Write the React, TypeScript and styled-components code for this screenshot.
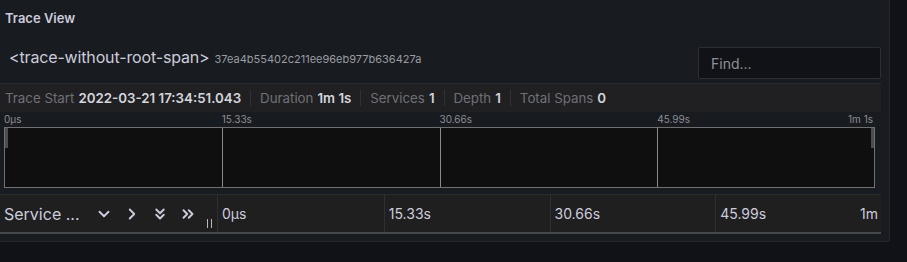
import styled, { createGlobalStyle } from "styled-components";
import { ChevronDown, ChevronRight, ChevronsDown, ChevronsRight } from "lucide-react";

const GlobalStyle = createGlobalStyle`
  html, body {
    margin: 0;
    padding: 0;
    background: #111217;
  }
  body {
    font-family: Inter, "Noto Sans", sans-serif;
    color: #ccccdc;
  }
`;

const Page = styled.div`
  width: 907px;
  height: 262px;
  overflow: hidden;
  background: #111217;
`;

const Panel = styled.div`
  width: 890px;
  height: 242px;
  box-sizing: border-box;
  background: #181b1f;
  border-right: 1px solid #25272c;
  border-bottom: 1px solid #25272c;
  border-bottom-right-radius: 3px;
  padding: 0 8px 0 0;
  display: flex;
  flex-direction: column;
`;

const PanelTitle = styled.div`
  height: 36px;
  padding-left: 5px;
  display: flex;
  align-items: center;
  font-size: 13px;
  font-weight: 600;
  color: #ccccdc;
`;

const Header = styled.div`
  height: 47px;
  display: flex;
  align-items: flex-start;
  justify-content: space-between;
`;

const TitleGroup = styled.div`
  display: flex;
  align-items: baseline;
  gap: 5px;
  padding: 10px 0 0 9px;
`;

const TraceName = styled.span`
  font-size: 16px;
  line-height: 22px;
  letter-spacing: -0.15px;
  color: #ccccdc;
`;

const TraceId = styled.span`
  font-size: 11px;
  color: #9a9ba3;
`;

const FindInput = styled.input`
  box-sizing: border-box;
  width: 183px;
  height: 32px;
  margin-top: 11px;
  background: #111217;
  border: 1px solid #2c2e33;
  border-radius: 2px;
  padding: 0 12px;
  font-family: Inter, sans-serif;
  font-size: 14px;
  color: #ccccdc;
  outline: none;

  &::placeholder {
    color: #8e8f96;
  }
`;

const Summary = styled.div`
  height: 29px;
  box-sizing: border-box;
  background: #202023;
  border-top: 1px solid #26282c;
  display: flex;
  align-items: center;
  padding-left: 5px;
  font-size: 13.3px;
`;

const Stat = styled.span`
  color: #6f7076;
  display: flex;
  align-items: center;

  & + &::before {
    content: "";
    width: 1px;
    height: 16px;
    background: #303135;
    margin: 0 9px 0 9px;
  }
`;

const StatValue = styled.b`
  color: #d4d5dd;
  font-weight: 600;
  margin-left: 4px;
`;

const Minimap = styled.div`
  padding: 0 6px 0 4px;
`;

const TickRow = styled.div`
  height: 15px;
  display: grid;
  grid-template-columns: repeat(4, 1fr);
  font-size: 10px;
  color: #8d8e95;
  line-height: 15px;
`;

const TickCell = styled.div<{ $split?: boolean }>`
  display: flex;
  justify-content: ${(p) => (p.$split ? "space-between" : "flex-start")};
  padding: 0 2px 0 0;
`;

const Canvas = styled.div`
  position: relative;
  height: 61px;
  box-sizing: border-box;
  background: #0f0f10;
  border: 1px solid #707070;
  display: grid;
  grid-template-columns: repeat(4, 1fr);
`;

const CanvasCol = styled.div`
  & + & {
    border-left: 1px solid #8a8a8a;
  }
`;

const Handle = styled.div<{ $side: "left" | "right" }>`
  position: absolute;
  top: 0;
  ${(p) => p.$side}: 0;
  width: 3px;
  height: 20px;
  background: #4d4d4f;
`;

const Timeline = styled.div`
  margin-top: 6px;
  height: 40px;
  box-sizing: border-box;
  background: #1f1f20;
  border-top: 1px solid #2b2b2d;
  border-bottom: 2px solid #47484b;
  display: flex;
`;

const ServiceCol = styled.div`
  position: relative;
  width: 218px;
  box-sizing: border-box;
  border-right: 1px solid #2f3033;
  display: flex;
  align-items: center;
  padding-left: 4px;
`;

const ServiceLabel = styled.span`
  font-size: 16px;
  color: #ccccdc;
  width: 86px;
  white-space: nowrap;
`;

const IconButton = styled.span`
  width: 28px;
  display: flex;
  justify-content: center;
  color: #ccccdc;
`;

const Resizer = styled.div`
  position: absolute;
  right: 5px;
  bottom: 4px;
  width: 3px;
  height: 9px;
  border-left: 1px solid #b8b8c0;
  border-right: 1px solid #b8b8c0;
`;

const TickHeader = styled.div`
  flex: 1;
  display: grid;
  grid-template-columns: repeat(4, 1fr);
`;

const TickHeaderCell = styled.div<{ $split?: boolean }>`
  display: flex;
  align-items: center;
  justify-content: ${(p) => (p.$split ? "space-between" : "flex-start")};
  padding: 0 3px 0 4px;
  font-size: 14px;
  color: #ccccdc;

  & + & {
    border-left: 1px solid #2f3033;
  }
`;

export default function App() {
  return (
    <Page>
      <GlobalStyle />
      <Panel>
        <PanelTitle>Trace View</PanelTitle>
        <Header>
          <TitleGroup>
            <TraceName>&lt;trace-without-root-span&gt;</TraceName>
            <TraceId>37ea4b55402c211ee96eb977b636427a</TraceId>
          </TitleGroup>
          <FindInput placeholder="Find..." />
        </Header>
        <Summary>
          <Stat>
            Trace Start<StatValue>2022-03-21 17:34:51.043</StatValue>
          </Stat>
          <Stat>
            Duration<StatValue>1m 1s</StatValue>
          </Stat>
          <Stat>
            Services<StatValue>1</StatValue>
          </Stat>
          <Stat>
            Depth<StatValue>1</StatValue>
          </Stat>
          <Stat>
            Total Spans<StatValue>0</StatValue>
          </Stat>
        </Summary>
        <Minimap>
          <TickRow>
            <TickCell>0μs</TickCell>
            <TickCell>15.33s</TickCell>
            <TickCell>30.66s</TickCell>
            <TickCell $split>
              <span>45.99s</span>
              <span>1m 1s</span>
            </TickCell>
          </TickRow>
          <Canvas>
            <CanvasCol />
            <CanvasCol />
            <CanvasCol />
            <CanvasCol />
            <Handle $side="left" />
            <Handle $side="right" />
          </Canvas>
        </Minimap>
        <Timeline>
          <ServiceCol>
            <ServiceLabel>Service ...</ServiceLabel>
            <IconButton>
              <ChevronDown size={18} strokeWidth={2.5} />
            </IconButton>
            <IconButton>
              <ChevronRight size={18} strokeWidth={2.5} />
            </IconButton>
            <IconButton>
              <ChevronsDown size={18} strokeWidth={2.5} />
            </IconButton>
            <IconButton>
              <ChevronsRight size={18} strokeWidth={2.5} />
            </IconButton>
            <Resizer />
          </ServiceCol>
          <TickHeader>
            <TickHeaderCell>0μs</TickHeaderCell>
            <TickHeaderCell>15.33s</TickHeaderCell>
            <TickHeaderCell>30.66s</TickHeaderCell>
            <TickHeaderCell $split>
              <span>45.99s</span>
              <span>1m</span>
            </TickHeaderCell>
          </TickHeader>
        </Timeline>
      </Panel>
    </Page>
  );
}
